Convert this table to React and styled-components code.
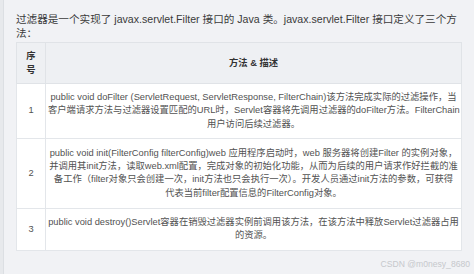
import React from "react";
import styled, { createGlobalStyle } from "styled-components";

const Global = createGlobalStyle`
  html, body {
    margin: 0;
    padding: 0;
    background: #f1f2f5;
  }
  body {
    font-family: "Liberation Sans", "Noto Sans CJK SC", sans-serif;
  }
`;

const Page = styled.div`
  display: flex;
  width: 474px;
  height: 274px;
  overflow: hidden;
  background: #f1f2f5;
`;

const SideStrip = styled.div`
  width: 4px;
  flex: none;
  background: #e7e9ec;
  border-right: 1px solid #dcdfe3;
  box-sizing: border-box;
`;

const Content = styled.div`
  flex: 1;
  min-width: 0;
  padding: 12px 12px 0 12px;
  display: flex;
  flex-direction: column;
`;

const Intro = styled.p`
  margin: 0 0 2px;
  font-size: 10.6px;
  line-height: 14px;
  color: #3a3a3a;
  white-space: nowrap;
`;

const Table = styled.table`
  width: 446px;
  border-collapse: collapse;
  table-layout: fixed;
  font-size: 9.3px;
  line-height: 13.3px;
  color: #525252;
  background: #fff;
`;

const HeadCell = styled.th`
  background: #eef0f3;
  border: 1px solid #e0e3e7;
  font-weight: bold;
  color: #333;
  text-align: center;
  padding: 6px 3px;
  line-height: 14px;
  width: ${(p) => p.$width || "auto"};
`;

const Cell = styled.td`
  border: 1px solid #e3e6ea;
  text-align: center;
  vertical-align: middle;
  padding: ${(p) => p.$pad || "7px"} 2px;
  white-space: nowrap;
`;

const Footer = styled.div`
  display: flex;
  justify-content: flex-end;
  margin-top: 8px;
  margin-right: -8px;
  font-size: 8.6px;
  color: #c6c8cc;
  white-space: nowrap;
`;

const rows = [
  {
    no: "1",
    pad: "7px",
    lines: [
      "public void doFilter (ServletRequest, ServletResponse, FilterChain)该方法完成实际的过滤操作，当",
      "客户端请求方法与过滤器设置匹配的URL时，Servlet容器将先调用过滤器的doFilter方法。FilterChain",
      "用户访问后续过滤器。",
    ],
  },
  {
    no: "2",
    pad: "8px",
    lines: [
      "public void init(FilterConfig filterConfig)web 应用程序启动时，web 服务器将创建Filter 的实例对象，",
      "并调用其init方法，读取web.xml配置，完成对象的初始化功能，从而为后续的用户请求作好拦截的准",
      "备工作（filter对象只会创建一次，init方法也只会执行一次）。开发人员通过init方法的参数，可获得",
      "代表当前filter配置信息的FilterConfig对象。",
    ],
  },
  {
    no: "3",
    pad: "7px",
    lines: [
      "public void destroy()Servlet容器在销毁过滤器实例前调用该方法，在该方法中释放Servlet过滤器占用",
      "的资源。",
    ],
  },
];

export default function App() {
  return (
    <>
      <Global />
      <Page>
        <SideStrip />
        <Content>
          <Intro>
            过滤器是一个实现了 javax.servlet.Filter 接口的 Java 类。javax.servlet.Filter 接口定义了三个方
            <br />
            法：
          </Intro>
          <Table>
            <thead>
              <tr>
                <HeadCell $width="22px">
                  序<br />号
                </HeadCell>
                <HeadCell>方法 &amp; 描述</HeadCell>
              </tr>
            </thead>
            <tbody>
              {rows.map((r) => (
                <tr key={r.no}>
                  <Cell $pad={r.pad}>{r.no}</Cell>
                  <Cell $pad={r.pad}>
                    {r.lines.map((l, i) => (
                      <React.Fragment key={i}>
                        {i > 0 && <br />}
                        {l}
                      </React.Fragment>
                    ))}
                  </Cell>
                </tr>
              ))}
            </tbody>
          </Table>
          <Footer>CSDN @m0nesy_8680</Footer>
        </Content>
      </Page>
    </>
  );
}
